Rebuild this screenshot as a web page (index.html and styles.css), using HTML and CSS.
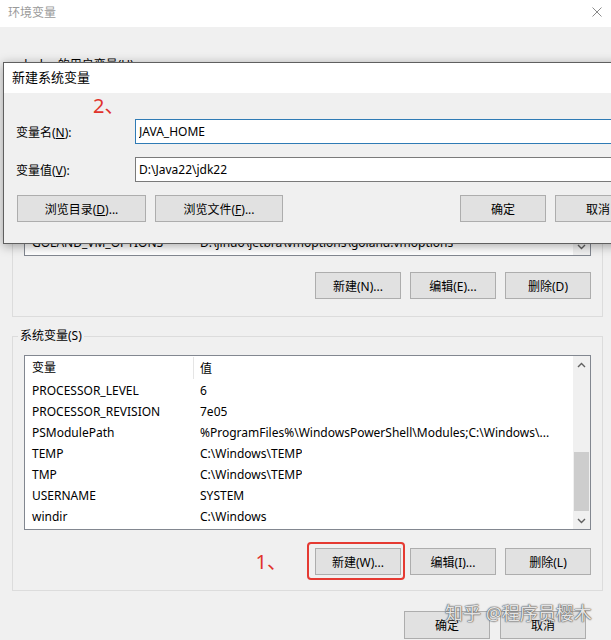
FILE: index.html
```html
<!DOCTYPE html>
<html lang="zh-CN">
<head>
  <meta charset="UTF-8">
  <meta name="viewport" content="width=device-width, initial-scale=1.0">
  <title>环境变量</title>
  <link rel="stylesheet" href="styles.css">
</head>
<body>
  <div class="window">
    <div class="titlebar">
      <span class="title">环境变量</span>
      <svg class="close" width="10" height="10" viewBox="0 0 10 10"><path d="M0.5 0.5L9.5 9.5M9.5 0.5L0.5 9.5" stroke="#8a8a8a" stroke-width="1" fill="none"/></svg>
    </div>

    <div class="content">
      <fieldset class="group user">
        <legend>dasho 的用户变量(<u>U</u>)</legend>
        <div class="list">
          <div class="rows">
            <div class="row"><span class="name">ChocolateyLastPathUpdate</span><span class="value">133560184566412345</span></div>
            <div class="row"><span class="name">GOLAND_VM_OPTIONS</span><span class="value">D:\jihuo\jetbra\vmoptions\goland.vmoptions</span></div>
          </div>
          <div class="scrollbar">
            <span class="arrow up"><svg width="9" height="6" viewBox="0 0 9 6"><path d="M1 5L4.5 1.5L8 5" stroke="#606060" stroke-width="1.4" fill="none"/></svg></span>
            <span class="track"></span>
            <span class="arrow down"><svg width="9" height="6" viewBox="0 0 9 6"><path d="M1 1L4.5 4.5L8 1" stroke="#606060" stroke-width="1.4" fill="none"/></svg></span>
          </div>
        </div>
        <div class="actions">
          <button>新建(N)...</button>
          <button>编辑(E)...</button>
          <button>删除(D)</button>
        </div>
      </fieldset>

      <fieldset class="group system">
        <legend>系统变量(S)</legend>
        <div class="list">
          <div class="rows">
            <div class="row head"><span class="name">变量</span><span class="value">值</span></div>
            <div class="row"><span class="name">PROCESSOR_LEVEL</span><span class="value">6</span></div>
            <div class="row"><span class="name">PROCESSOR_REVISION</span><span class="value">7e05</span></div>
            <div class="row"><span class="name">PSModulePath</span><span class="value">%ProgramFiles%\WindowsPowerShell\Modules;C:\Windows\...</span></div>
            <div class="row"><span class="name">TEMP</span><span class="value">C:\Windows\TEMP</span></div>
            <div class="row"><span class="name">TMP</span><span class="value">C:\Windows\TEMP</span></div>
            <div class="row"><span class="name">USERNAME</span><span class="value">SYSTEM</span></div>
            <div class="row"><span class="name">windir</span><span class="value">C:\Windows</span></div>
          </div>
          <div class="scrollbar">
            <span class="arrow up"><svg width="9" height="6" viewBox="0 0 9 6"><path d="M1 5L4.5 1.5L8 5" stroke="#606060" stroke-width="1.4" fill="none"/></svg></span>
            <span class="track"><span class="thumb"></span></span>
            <span class="arrow down"><svg width="9" height="6" viewBox="0 0 9 6"><path d="M1 1L4.5 4.5L8 1" stroke="#606060" stroke-width="1.4" fill="none"/></svg></span>
          </div>
        </div>
        <div class="actions">
          <span class="mark step1">1、</span>
          <span class="highlight"><button>新建(W)...</button></span>
          <button>编辑(I)...</button>
          <button>删除(L)</button>
        </div>
      </fieldset>

      <div class="footer">
        <button>确定</button>
        <button>取消</button>
      </div>
    </div>

    <div class="dialog">
      <div class="dialog-head">新建系统变量</div>
      <div class="dialog-body">
        <div class="mark step2">2、</div>
        <div class="field">
          <label>变量名(<u>N</u>):</label>
          <input type="text" class="focused" value="JAVA_HOME">
        </div>
        <div class="field">
          <label>变量值(<u>V</u>):</label>
          <input type="text" value="D:\Java22\jdk22">
        </div>
        <div class="dialog-actions">
          <button class="wide">浏览目录(<u>D</u>)...</button>
          <button class="wide">浏览文件(<u>F</u>)...</button>
          <span class="spacer"></span>
          <button>确定</button>
          <button>取消</button>
        </div>
      </div>
    </div>

    <div class="watermark">知乎 @程序员樱木</div>
  </div>
</body>
</html>
```

FILE: styles.css
```css
body {
  margin: 0;
  font-family: 'Noto Sans', 'Noto Sans CJK SC', sans-serif;
  font-size: 12px;
  color: #000;
  background-color: #f0f0f0;
}
.window {
  position: relative;
  width: 611px;
  height: 640px;
  overflow: hidden;
  background-color: #f0f0f0;
}
.titlebar {
  height: 27px;
  background-color: #fff;
  display: flex;
  align-items: center;
  justify-content: space-between;
  padding: 0 9px 4px 8px;
  box-sizing: border-box;
}
.title {
  color: #9a9a9a;
  font-size: 12px;
}
.content {
  padding: 30px 8px 0 12px;
}
.group {
  margin: 0;
  padding: 7px 11px 17px 11px;
  border: 1px solid #dcdcdc;
  min-width: 0;
}
.group legend {
  padding: 0 2px;
  margin-left: -6px;
  line-height: 16px;
}
.system {
  margin-top: 11px;
  padding-top: 11px;
  padding-bottom: 15px;
}
.list {
  display: flex;
  height: 176px;
  box-sizing: border-box;
  border: 1px solid #828790;
  background-color: #fff;
}
.system .list {
  height: 175px;
}
.rows {
  flex: 1;
  display: flex;
  flex-direction: column;
  overflow: hidden;
  min-width: 0;
}
.user .rows {
  justify-content: flex-end;
  padding-bottom: 2px;
}
.row {
  display: flex;
  height: 21px;
  align-items: center;
  white-space: nowrap;
}
.row.head {
  height: 24px;
}
.name {
  width: 161px;
  padding-left: 7px;
  flex-shrink: 0;
}
.value {
  overflow: hidden;
  padding-left: 7px;
}
.head .name {
  border-right: 1px solid #e5e5e5;
  height: 22px;
  line-height: 22px;
}
.head .value {
  padding-left: 6px;
}
.scrollbar {
  width: 17px;
  display: flex;
  flex-direction: column;
  background-color: #f0f0f0;
}
.arrow {
  height: 17px;
  display: flex;
  align-items: center;
  justify-content: center;
}
.track {
  flex: 1;
  display: flex;
  flex-direction: column;
  align-items: center;
}
.thumb {
  width: 15px;
  height: 59px;
  margin-top: 79px;
  background-color: #cdcdcd;
}
.actions {
  display: flex;
  justify-content: flex-end;
  align-items: center;
  gap: 9px;
  margin-top: 16px;
}
.system .actions {
  margin-top: 18px;
}
button {
  width: 86px;
  height: 27px;
  padding: 0;
  box-sizing: border-box;
  border: 1px solid #adadad;
  background-color: #e1e1e1;
  font-family: inherit;
  font-size: 12px;
  color: #000;
}
.highlight {
  position: relative;
  display: flex;
}
.highlight::after {
  content: '';
  position: absolute;
  top: -6px;
  bottom: -5px;
  left: -8px;
  right: -4px;
  border: 2px solid #e53a32;
  border-radius: 4px;
}
.mark {
  color: #e0332c;
  font-size: 20px;
  line-height: 26px;
}
.step1 {
  margin-right: 19px;
}
.footer {
  display: flex;
  justify-content: flex-end;
  gap: 10px;
  margin-top: 20px;
  padding-right: 17px;
}
.footer button {
  height: 28px;
}
.dialog {
  position: absolute;
  left: 3px;
  top: 62px;
  width: 651px;
  height: 182px;
  box-sizing: border-box;
  background-color: #f0f0f0;
  border: 1px solid #5f5f5f;
  box-shadow: 0 2px 10px rgba(0, 0, 0, 0.35);
}
.dialog-head {
  height: 30px;
  line-height: 28px;
  padding-left: 8px;
  background-color: #fff;
  font-size: 13px;
}
.dialog-body {
  padding: 0 12px;
}
.step2 {
  height: 26px;
  padding-left: 77px;
}
.field {
  display: flex;
  align-items: center;
  height: 25px;
  margin-bottom: 13px;
}
.field label {
  width: 119px;
  flex-shrink: 0;
}
.field input {
  flex: 1;
  height: 25px;
  box-sizing: border-box;
  border: 1px solid #7a7a7a;
  padding: 0 3px;
  font-family: inherit;
  font-size: 12px;
  background-color: #fff;
  outline: none;
}
.field input.focused {
  border-color: #2f7bb5;
}
.dialog-actions {
  display: flex;
  gap: 9px;
  margin-top: 5px;
}
.dialog-actions .wide {
  width: 129px;
  margin-left: 1px;
}
.dialog-actions .wide + .wide {
  margin-left: 0;
  width: 128px;
}
.spacer {
  flex: 1;
}
.watermark {
  position: absolute;
  left: 445px;
  top: 599px;
  font-size: 18px;
  white-space: nowrap;
  color: rgba(255, 255, 255, 0.85);
  text-shadow: 0 0 1px #555, 0 0 1px #555, 0 0 2px #777;
}
```
